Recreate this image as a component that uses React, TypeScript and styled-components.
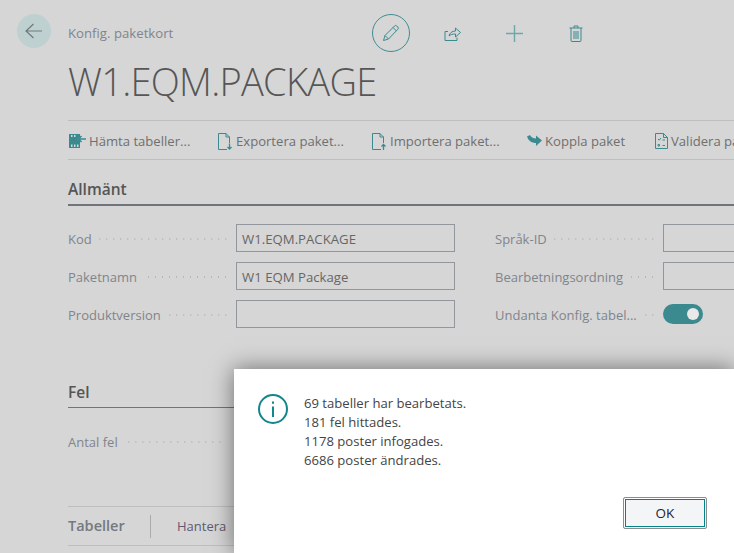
import React from "react";
import styled, { createGlobalStyle } from "styled-components";

const Global = createGlobalStyle`
  html, body { margin: 0; padding: 0; background: #d6d6d6; }
  body { font-family: "Open Sans", "Noto Sans", "Liberation Sans", sans-serif; }
  * { box-sizing: border-box; }
`;

const Page = styled.div`
  position: relative;
  width: 734px;
  height: 553px;
  overflow: hidden;
  background: #d6d6d6;
  color: #767676;
  font-size: 13px;
`;

const Rail = styled.div`
  position: absolute;
  left: 17px;
  top: 14px;
`;

const BackButton = styled.div`
  width: 34px;
  height: 34px;
  border-radius: 50%;
  background: #bfd0d1;
  display: flex;
  align-items: center;
  justify-content: center;
`;

const Main = styled.main`
  width: 734px;
  padding-left: 68px;
  display: flex;
  flex-direction: column;
`;

const Header = styled.header`
  height: 64px;
  display: flex;
  align-items: flex-start;
`;

const Breadcrumb = styled.div`
  width: 304px;
  padding-top: 25px;
  line-height: 17px;
  font-size: 13.2px;
  color: #80858c;
`;

const Actions = styled.div`
  padding-top: 14px;
  display: flex;
  align-items: center;
`;

const EditCircle = styled.div`
  width: 38px;
  height: 38px;
  border-radius: 50%;
  border: 1px solid #3f8e93;
  display: flex;
  align-items: center;
  justify-content: center;
  margin-right: 32px;
`;

const ActionIcon = styled.div<{ $gap: number }>`
  width: 20px;
  height: 20px;
  margin-right: ${(p) => p.$gap}px;
  display: flex;
  align-items: center;
  justify-content: center;
`;

const Title = styled.h1`
  margin: 0;
  height: 56px;
  font-size: 38px;
  line-height: 34px;
  font-weight: 300;
  color: #565656;
  letter-spacing: -0.72px;
  white-space: nowrap;
`;

const Toolbar = styled.div`
  height: 40px;
  padding: 2px 0 0 1px;
  border-top: 1px solid #bebebe;
  border-bottom: 1px solid #bebebe;
  display: flex;
  align-items: center;
  overflow: hidden;
  white-space: nowrap;
`;

const ToolButton = styled.div<{ $width: number }>`
  flex: 0 0 ${(p) => p.$width}px;
  display: flex;
  align-items: center;
  gap: 3px;
  color: #6f6f6f;
  font-size: 13.1px;
  line-height: 18px;
`;

const Section = styled.section<{ $top: number }>`
  margin-top: ${(p) => p.$top}px;
`;

const SectionHead = styled.h2<{ $thick?: boolean }>`
  margin: 0;
  height: ${(p) => (p.$thick ? 26 : 25)}px;
  font-size: 15.5px;
  line-height: 18px;
  font-weight: 600;
  color: #555;
  border-bottom: ${(p) => (p.$thick ? 2 : 1)}px solid #70757c;
`;

const FieldGrid = styled.div`
  display: grid;
  grid-template-columns: 427px 1fr;
  padding-top: 18px;
`;

const FieldColumn = styled.div`
  display: flex;
  flex-direction: column;
  gap: 10px;
`;

const FieldRow = styled.div<{ $label: number }>`
  height: 28px;
  display: grid;
  grid-template-columns: ${(p) => p.$label}px 1fr;
  align-items: center;
`;

const Label = styled.div`
  flex: 1;
  display: flex;
  align-items: center;
  color: #80858c;
  font-size: 13px;
  padding-top: 2px;
  white-space: nowrap;
  min-width: 0;
  padding-right: 7px;
`;

const Leader = styled.span`
  flex: 1;
  margin-left: 7px;
  height: 2px;
  background-image: radial-gradient(circle, #b8b8b8 1px, transparent 1px);
  background-size: 7px 2px;
  background-position: right center;
`;

const Input = styled.div<{ $width: number }>`
  width: ${(p) => p.$width}px;
  height: 28px;
  border: 1px solid #92979d;
  padding: 1px 4px 0 5px;
  color: #666;
  font-size: 13.2px;
  line-height: 26px;
  white-space: nowrap;
`;

const Toggle = styled.div`
  width: 40px;
  height: 20px;
  border-radius: 10px;
  background: #3b8a90;
  display: flex;
  align-items: center;
  justify-content: flex-end;
  padding-right: 4px;
`;

const Knob = styled.span`
  width: 12px;
  height: 12px;
  border-radius: 50%;
  background: #e9e9e9;
`;

const LonelyRow = styled.div`
  width: 162px;
  height: 47px;
  padding-top: 18px;
  display: flex;
  align-items: center;
`;

const TabStrip = styled.div`
  margin-top: 51px;
  height: 40px;
  border-top: 1px solid #bebebe;
  border-bottom: 1px solid #bebebe;
  display: flex;
  align-items: center;
`;

const TabTitle = styled.div`
  width: 83px;
  height: 23px;
  border-right: 1px solid #a9abae;
  font-size: 14.5px;
  font-weight: 600;
  color: #737980;
  line-height: 21px;
`;

const TabLink = styled.div`
  margin-left: 26px;
  font-size: 13px;
  color: #5e5a72;
`;

const Dialog = styled.div`
  position: absolute;
  left: 234px;
  top: 369px;
  width: 500px;
  height: 184px;
  background: #fff;
  box-shadow: 0 0 22px rgba(0, 0, 0, 0.5);
  display: flex;
  flex-direction: column;
`;

const DialogBody = styled.div`
  flex: 1;
  display: flex;
  padding: 25px 0 0 24px;
`;

const Message = styled.div`
  margin-left: 16px;
  font-size: 13.1px;
  line-height: 19px;
  color: #444;
`;

const DialogFooter = styled.div`
  padding: 0 27px 24px 0;
  display: flex;
  justify-content: flex-end;
`;

const OkButton = styled.button`
  width: 84px;
  height: 32px;
  padding: 0;
  background: #f4f5f7;
  border: 1px solid #8d8d8d;
  border-radius: 2px;
  box-shadow: inset 0 0 0 1px #fff, inset 0 0 0 2px #008489;
  font-family: inherit;
  font-size: 13.5px;
  font-weight: 400;
  color: #22222e;
`;

const Ico = styled.svg`
  display: block;
  flex: none;
`;

const tealStroke = { fill: "none", stroke: "#3b8a90", strokeWidth: 1 };

export default function App() {
  return (
    <Page>
      <Global />
      <Rail>
        <BackButton>
          <Ico width="18" height="16" viewBox="0 0 18 16" fill="none" stroke="#6f7a7c" strokeWidth="1.2">
            <path d="M1 8h16M8.500 1 1 8l7.500 7" />
          </Ico>
        </BackButton>
      </Rail>
      <Main>
        <Header>
          <Breadcrumb>Konfig. paketkort</Breadcrumb>
          <Actions>
            <EditCircle>
              <Ico width="18" height="18" viewBox="0 0 18 18" {...tealStroke}>
                <path d="M1.500 16.500 3 11.500 12.500 2a1.600 1.600 0 0 1 2.300 0l1 1a1.600 1.600 0 0 1 0 2.300L6.500 15zM3 11.500l3.500 3.500M11 3.500l3.500 3.500" />
              </Ico>
            </EditCircle>
            <ActionIcon $gap={42}>
              <Ico width="17" height="15" viewBox="0 0 17 15" {...tealStroke}>
                <path d="M4 5.500H1v9h12v-3M5 10c.5-3 3-5 6.500-5V2l5 4.500-5 4.500V8c-3 0-5 .5-6.500 2z" />
              </Ico>
            </ActionIcon>
            <ActionIcon $gap={42}>
              <Ico width="17" height="17" viewBox="0 0 17 17" fill="none" stroke="#6fa6aa" strokeWidth="1.4">
                <path d="M8.500 0v17M0 8.500h17" />
              </Ico>
            </ActionIcon>
            <ActionIcon $gap={0}>
              <Ico width="14" height="17" viewBox="0 0 14 17" {...tealStroke}>
                <path d="M.5 3h13M5 3V1h4v2M2 3v12.500a1 1 0 0 0 1 1h8a1 1 0 0 0 1-1V3M5 6v8M7 6v8M9 6v8" />
              </Ico>
            </ActionIcon>
          </Actions>
        </Header>
        <Title>W1.EQM.PACKAGE</Title>
        <Toolbar>
          <ToolButton $width={149}>
            <Ico width="17" height="14" viewBox="0 0 17 14">
              <path fill="#3b8a90" d="M0 0h11v3L8.500 5 11 7v7H0z" />
              <path fill="#d6d6d6" d="M2 1h1.500v2H2zM5 1h1.500v2H5zM2 10.500h1.500V13H2zM5 10.500h1.500V13H5zM8 10.500h1.500V13H8z" />
              <path fill="none" stroke="#3b8a90" strokeWidth="1.600" d="M17 5H9.500M12.500 2l-3 3 3 3" />
            </Ico>
            Hämta tabeller...
          </ToolButton>
          <ToolButton $width={154}>
            <Ico width="15" height="17" viewBox="0 0 15 17" {...tealStroke}>
              <path d="M9 16.500H.5V.500H8L11.500 4v6M8 .500V4h3.500" />
              <path strokeWidth="1.300" d="M11.500 10.500v5.500M9.500 14l2 2 2-2" />
            </Ico>
            Exportera paket...
          </ToolButton>
          <ToolButton $width={155}>
            <Ico width="15" height="17" viewBox="0 0 15 17" {...tealStroke}>
              <path d="M9 16.500H.5V.500H8L11.500 4v6M8 .500V4h3.500" />
              <path strokeWidth="1.300" d="M11.500 17v-5.500M9.500 13.500l2-2 2 2" />
            </Ico>
            Importera paket...
          </ToolButton>
          <ToolButton $width={128}>
            <Ico width="15" height="12" viewBox="0 0 15 12">
              <path fill="#3b8a90" d="M0 1.500 3 0c1 2 3 3.500 6 3.500V.500L15 5.500 9 11V8C5 8 1.500 6 0 1.500z" />
            </Ico>
            Koppla paket
          </ToolButton>
          <ToolButton $width={90}>
            <Ico width="13" height="16" viewBox="0 0 13 16" {...tealStroke}>
              <path d="M.5.500H8.500L12.500 4.500V15.500H.5zM8.500.500V4.500H12.500M3 6l1.200 1.200L6 5M7.500 7H10M3 11.500h1.500v1.500H3zM7.500 12.500H10" />
            </Ico>
            Validera paket
          </ToolButton>
        </Toolbar>
        <Section $top={20}>
          <SectionHead $thick>Allmänt</SectionHead>
          <FieldGrid>
            <FieldColumn>
              <FieldRow $label={168}>
                <Label>Kod<Leader /></Label>
                <Input $width={219}>W1.EQM.PACKAGE</Input>
              </FieldRow>
              <FieldRow $label={168}>
                <Label>Paketnamn<Leader /></Label>
                <Input $width={219}>W1 EQM Package</Input>
              </FieldRow>
              <FieldRow $label={168}>
                <Label>Produktversion<Leader /></Label>
                <Input $width={219} />
              </FieldRow>
            </FieldColumn>
            <FieldColumn>
              <FieldRow $label={168}>
                <Label>Språk-ID<Leader /></Label>
                <Input $width={90} />
              </FieldRow>
              <FieldRow $label={168}>
                <Label>Bearbetningsordning<Leader /></Label>
                <Input $width={90} />
              </FieldRow>
              <FieldRow $label={168}>
                <Label>Undanta Konfig. tabel...<Leader /></Label>
                <Toggle><Knob /></Toggle>
              </FieldRow>
            </FieldColumn>
          </FieldGrid>
        </Section>
        <Section $top={55}>
          <SectionHead>Fel</SectionHead>
          <LonelyRow>
            <Label>Antal fel<Leader /></Label>
          </LonelyRow>
        </Section>
        <TabStrip>
          <TabTitle>Tabeller</TabTitle>
          <TabLink>Hantera</TabLink>
        </TabStrip>
      </Main>
      <Dialog>
        <DialogBody>
          <Ico width="30" height="30" viewBox="0 0 30 30" fill="none" stroke="#12868b" strokeWidth="2">
            <circle cx="15" cy="15" r="14" />
            <path d="M15 12.500V23" />
            <path d="M15 7.500v2.200" />
          </Ico>
          <Message>
            69 tabeller har bearbetats.<br />
            181 fel hittades.<br />
            1178 poster infogades.<br />
            6686 poster ändrades.
          </Message>
        </DialogBody>
        <DialogFooter>
          <OkButton>OK</OkButton>
        </DialogFooter>
      </Dialog>
    </Page>
  );
}
